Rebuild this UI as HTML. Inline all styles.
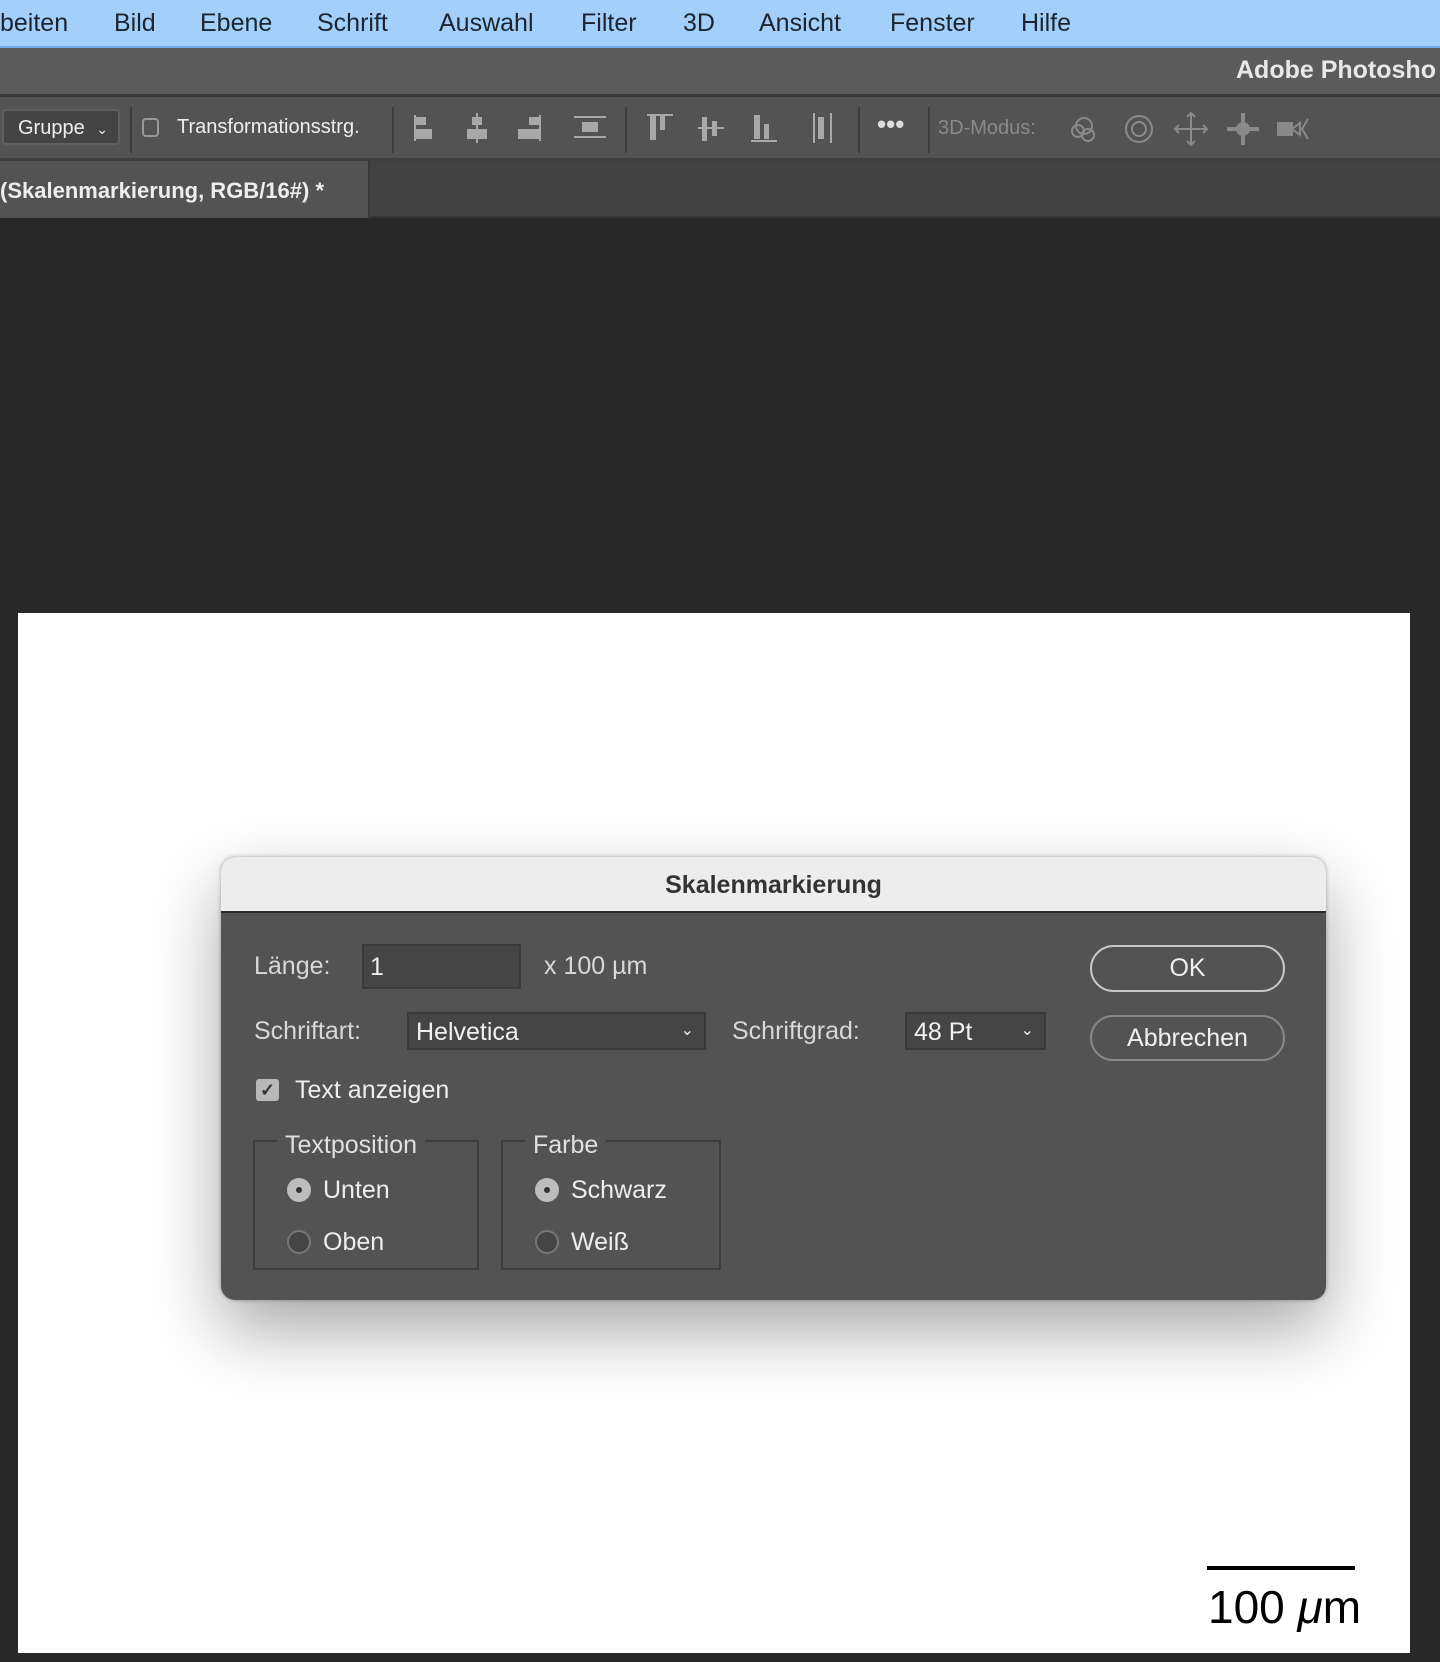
<!DOCTYPE html>
<html><head><meta charset="utf-8"><style>
*{box-sizing:border-box;margin:0;padding:0}
body{width:1440px;height:1662px;background:#282828;font-family:"Liberation Sans",sans-serif;position:relative;overflow:hidden}
.a{position:absolute}
.menu{left:0;top:0;width:1440px;height:48px;background:#a2d0fa;border-bottom:2px solid #6fa9e6}
.menu span{position:absolute;top:9px;font-size:25px;color:#1b2430}
.title{left:0;top:48px;width:1440px;height:49px;background:#5b5b5b;border-bottom:3px solid #3a3a3a}
.opt{left:0;top:97px;width:1440px;height:64px;background:#535353;border-bottom:3px solid #3e3e3e}
.tabs{left:0;top:161px;width:1440px;height:57px;background:#424242;border-bottom:2px solid #333}
.sep{position:absolute;top:10px;width:2px;height:46px;background:#3d3d3d}
.ic{position:absolute;background:#a8a8a8}
.dlg{left:221px;top:857px;width:1105px;height:443px;border-radius:14px;overflow:hidden;background:#535353;box-shadow:0 30px 70px rgba(0,0,0,.35),0 0 4px rgba(0,0,0,.3)}
.dt{left:0;top:0;width:1105px;height:56px;background:#ededed;border-bottom:2px solid #2a2a2a;text-align:center;font-weight:bold;font-size:25px;color:#333;line-height:56px}
.lbl{position:absolute;font-size:25px;color:#d8d8d8}
.box{position:absolute;background:#454545;border:2px solid #3a3a3a}
.btn{position:absolute;border:2px solid #c8c8c8;border-radius:24px;color:#f0f0f0;font-size:25px;text-align:center}
.fs{position:absolute;border:2px solid #3d3d3d}
.leg{position:absolute;background:#535353;padding:0 8px;font-size:25px;color:#e0e0e0;top:-10px;line-height:26px}
.rad{position:absolute;width:24px;height:24px;border-radius:50%;background:#454545;border:2px solid #777}
.rad.on{background:#bdbdbd;border-color:#bdbdbd}
.rad.on:after{content:"";position:absolute;left:7px;top:7px;width:6px;height:6px;border-radius:50%;background:#333}
</style></head><body>
<div class="a menu">
<span style="left:0">beiten</span><span style="left:114px">Bild</span><span style="left:200px">Ebene</span><span style="left:317px">Schrift</span><span style="left:439px">Auswahl</span><span style="left:581px">Filter</span><span style="left:683px">3D</span><span style="left:759px">Ansicht</span><span style="left:890px">Fenster</span><span style="left:1021px">Hilfe</span>
</div>
<div class="a title"><span class="a" style="left:1236px;top:8px;font-size:25px;font-weight:bold;color:#e8e8e8;white-space:nowrap">Adobe Photosho</span></div>
<div class="a opt">
<div class="a" style="left:2px;top:12px;width:118px;height:36px;background:#444;border:2px solid #5f5f5f;border-radius:4px;color:#eee;font-size:20px;padding:6px 0 0 14px">Gruppe <span style="font-size:14px;margin-left:6px">&#8964;</span></div>
<div class="sep" style="left:130px"></div>
<div class="a" style="left:142px;top:21px;width:17px;height:19px;border:2px solid #999;border-radius:4px"></div>
<div class="a" style="left:177px;top:19px;color:#eee;font-size:20px">Transformationsstrg.</div>
<div class="sep" style="left:392px"></div><div class="sep" style="left:625px"></div><div class="sep" style="left:858px"></div><div class="sep" style="left:928px"></div>
<div class="ic" style="left:414px;top:18px;width:2px;height:26px"></div><div class="ic" style="left:416px;top:20px;width:10px;height:8px"></div><div class="ic" style="left:416px;top:32px;width:16px;height:10px"></div>
<div class="ic" style="left:476px;top:16px;width:2px;height:30px"></div><div class="ic" style="left:472px;top:20px;width:10px;height:8px"></div><div class="ic" style="left:467px;top:32px;width:20px;height:10px"></div>
<div class="ic" style="left:539px;top:18px;width:2px;height:26px"></div><div class="ic" style="left:529px;top:20px;width:10px;height:8px"></div><div class="ic" style="left:518px;top:32px;width:21px;height:10px"></div>
<div class="ic" style="left:574px;top:19px;width:32px;height:2px"></div><div class="ic" style="left:582px;top:25px;width:16px;height:10px"></div><div class="ic" style="left:574px;top:39px;width:32px;height:2px"></div>
<div class="ic" style="left:647px;top:17px;width:26px;height:2px"></div><div class="ic" style="left:650px;top:19px;width:6px;height:24px"></div><div class="ic" style="left:660px;top:19px;width:5px;height:14px"></div>
<div class="ic" style="left:698px;top:30px;width:26px;height:2px"></div><div class="ic" style="left:702px;top:20px;width:5px;height:24px"></div><div class="ic" style="left:712px;top:24px;width:5px;height:15px"></div>
<div class="ic" style="left:751px;top:43px;width:26px;height:2px"></div><div class="ic" style="left:754px;top:18px;width:6px;height:24px"></div><div class="ic" style="left:764px;top:27px;width:5px;height:15px"></div>
<div class="ic" style="left:813px;top:16px;width:2px;height:30px"></div><div class="ic" style="left:818px;top:20px;width:6px;height:22px"></div><div class="ic" style="left:830px;top:16px;width:2px;height:30px"></div>
<div class="a" style="left:877px;top:12px;color:#ddd;font-size:26px;font-weight:bold">&#8226;&#8226;&#8226;</div>
<div class="a" style="left:938px;top:20px;color:#8a8a8a;font-size:20px">3D-Modus:</div>
<svg class="a" style="left:1068px;top:12px" width="260" height="40" fill="none" stroke="#8a8a8a" stroke-width="2">
<circle cx="16" cy="17" r="8"/><circle cx="10" cy="22" r="6"/><circle cx="20" cy="26" r="6"/>
<circle cx="71" cy="20" r="13"/><circle cx="71" cy="20" r="7"/>
<path d="M123 4v32M107 20h32M119 8l4-4 4 4M119 32l4 4 4-4M111 16l-4 4 4 4M135 16l4 4-4 4"/>
<path d="M175 4v32M159 20h32" stroke-width="4"/><circle cx="175" cy="20" r="6" fill="#8a8a8a"/>
<rect x="210" y="14" width="14" height="12" fill="#8a8a8a"/><path d="M224 20l8-6v12zM240 10l-6 10 6 10"/>
</svg>
</div>
<div class="a tabs"><div class="a" style="left:0;top:0;width:370px;height:57px;background:#535353;border-right:2px solid #3a3a3a"></div><span class="a" style="left:0;top:17px;font-size:22px;font-weight:bold;color:#eee;white-space:nowrap">(Skalenmarkierung, RGB/16#) *</span></div>
<div class="a" style="left:18px;top:613px;width:1392px;height:1040px;background:#fff"></div>
<div class="a" style="left:1207px;top:1566px;width:148px;height:4px;background:#000"></div>
<div class="a" style="left:1208px;top:1580px;font-size:46px;color:#000;white-space:nowrap">100 <i>μ</i>m</div>
<div class="a dlg">
<div class="a dt">Skalenmarkierung</div>
<div class="lbl" style="left:33px;top:95px">Länge:</div>
<div class="box" style="left:141px;top:87px;width:159px;height:45px;color:#eee;font-size:25px;padding:7px 0 0 6px">1</div>
<div class="lbl" style="left:323px;top:95px">x 100 µm</div>
<div class="btn" style="left:869px;top:88px;width:195px;height:47px;line-height:43px">OK</div>
<div class="lbl" style="left:33px;top:160px">Schriftart:</div>
<div class="box" style="left:186px;top:155px;width:299px;height:38px;color:#f0f0f0;font-size:25px;padding:4px 0 0 7px">Helvetica<span style="position:absolute;right:10px;top:6px;font-size:16px">&#8964;</span></div>
<div class="lbl" style="left:511px;top:160px">Schriftgrad:</div>
<div class="box" style="left:684px;top:155px;width:141px;height:38px;color:#f0f0f0;font-size:25px;padding:4px 0 0 7px">48 Pt<span style="position:absolute;right:10px;top:6px;font-size:16px">&#8964;</span></div>
<div class="btn" style="left:869px;top:158px;width:195px;height:46px;line-height:42px;border-color:#888">Abbrechen</div>
<div class="a" style="left:35px;top:222px;width:23px;height:22px;background:#b8b8b8;border-radius:3px;color:#333;font-size:18px;text-align:center;line-height:22px;font-weight:bold">✓</div>
<div class="lbl" style="left:74px;top:219px;color:#eee">Text anzeigen</div>
<div class="fs" style="left:32px;top:283px;width:226px;height:130px"><div class="leg" style="left:22px">Textposition</div>
<div class="rad on" style="left:32px;top:36px"></div><div class="lbl" style="left:68px;top:34px;color:#eee">Unten</div>
<div class="rad" style="left:32px;top:88px"></div><div class="lbl" style="left:68px;top:86px;color:#eee">Oben</div></div>
<div class="fs" style="left:280px;top:283px;width:220px;height:130px"><div class="leg" style="left:22px">Farbe</div>
<div class="rad on" style="left:32px;top:36px"></div><div class="lbl" style="left:68px;top:34px;color:#eee">Schwarz</div>
<div class="rad" style="left:32px;top:88px"></div><div class="lbl" style="left:68px;top:86px;color:#eee">Weiß</div></div>
</div>
</body></html>
